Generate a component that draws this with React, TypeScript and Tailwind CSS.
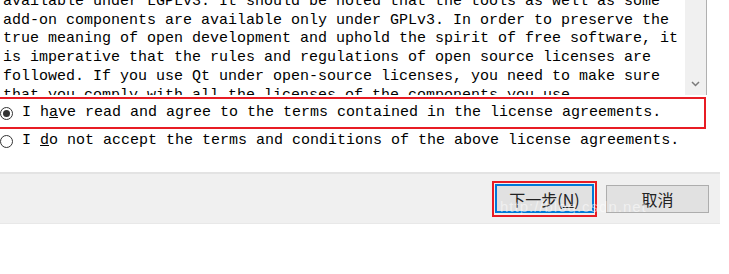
const lines = [
  'available under LGPLv3. It should be noted that the tools as well as some',
  'add-on components are available only under GPLv3. In order to preserve the',
  'true meaning of open development and uphold the spirit of free software, it',
  'is imperative that the rules and regulations of open source licenses are',
  'followed. If you use Qt under open-source licenses, you need to make sure',
  'that you comply with all the licenses of the components you use',
]

function Radio({ checked }: { checked: boolean }) {
  return (
    <span className="flex h-[13px] w-[13px] shrink-0 items-center justify-center rounded-full border border-[#333] bg-white">
      {checked && <span className="h-[7px] w-[7px] rounded-full bg-[#333]" />}
    </span>
  )
}

export default function App() {
  return (
    <div className="relative h-[274px] w-[729px] overflow-hidden bg-white font-['Liberation_Mono',monospace] text-[15px] text-black">
      {/* license text with scrollbar */}
      <div className="flex h-[95px] w-[707px] border-r border-[#b0b0b0]">
        <div className="h-full w-[685px] overflow-hidden pl-[3px]">
          <div className="-mt-[7px] leading-[18.7px] whitespace-pre">
            {lines.map((l) => (
              <div key={l}>{l}</div>
            ))}
          </div>
        </div>
        <div className="flex h-full w-[21px] flex-col items-center justify-end bg-[#f0f0f0] pb-[8px]">
          <svg width="9" height="6" viewBox="0 0 9 6">
            <path d="M1 1 L4.5 4.5 L8 1" fill="none" stroke="#7a7a7a" strokeWidth="1.5" />
          </svg>
        </div>
      </div>

      {/* options */}
      <div className="-ml-[10px] mt-[2px] flex h-[32px] w-[716px] items-center gap-[9px] border-2 border-[#e81c24] pl-[8px]">
        <Radio checked />
        <span className="whitespace-pre">
          I h<u>a</u>ve read and agree to the terms contained in the license agreements.
        </span>
      </div>
      <div className="-ml-[10px] mt-[1px] flex h-[22px] items-center gap-[9px] pl-[10px]">
        <Radio checked={false} />
        <span className="whitespace-pre">
          I <u>d</u>o not accept the terms and conditions of the above license agreements.
        </span>
      </div>

      {/* button bar */}
      <div className="relative mt-[20px] flex h-[52px] w-[720px] items-center justify-end gap-[9px] border-t-2 border-b border-t-[#e3e3e3] border-b-[#e8e8e8] bg-[#f0f0f0] pr-[11px] font-['Noto_Sans_CJK_SC',sans-serif] text-[16px]">
        <div className="flex h-[36px] w-[105px] items-center justify-center border-2 border-[#e81c24]">
          <button className="flex h-[29px] w-[99px] items-center justify-center border-2 border-[#0078d7] bg-[#e1e1e1] text-[#222]">
            下一步(<u>N</u>)
          </button>
        </div>
        <button className="flex h-[28px] w-[103px] items-center justify-center border border-[#adadad] bg-[#e1e1e1] text-[#222]">
          取消
        </button>
        <span className="pointer-events-none absolute left-[500px] top-[22px] font-['Liberation_Sans',sans-serif] text-[15px] tracking-[1px] text-white/50">
          http://blog.csdn.net
        </span>
      </div>
    </div>
  )
}
